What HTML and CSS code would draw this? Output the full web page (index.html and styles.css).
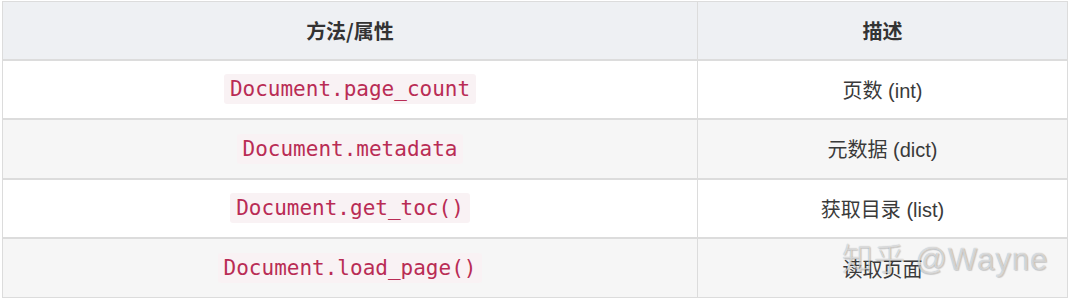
FILE: index.html
```html
<!DOCTYPE html>
<html lang="zh">
<head>
<meta charset="utf-8">
<link rel="stylesheet" href="styles.css">
</head>
<body>
<div class="wrap">
<table class="tbl">
  <thead>
    <tr><th class="c1">方法/属性</th><th class="c2">描述</th></tr>
  </thead>
  <tbody>
    <tr><td class="c1"><code>Document.page_count</code></td><td class="c2">页数 (int)</td></tr>
    <tr class="alt"><td class="c1"><code>Document.metadata</code></td><td class="c2">元数据 (dict)</td></tr>
    <tr><td class="c1"><code>Document.get_toc()</code></td><td class="c2">获取目录 (list)</td></tr>
    <tr class="alt"><td class="c1"><code>Document.load_page()</code></td><td class="c2">读取页面</td></tr>
  </tbody>
</table>
<div class="watermark">知乎 @Wayne</div>
</div>
</body>
</html>
```
FILE: styles.css
```css
html, body { margin: 0; padding: 0; background: #fff; }
body { padding: 1px 3px 0 2px; }
.wrap { position: relative; }
.tbl {
  width: 100%;
  border-collapse: collapse;
  font-family: "Liberation Sans", "Noto Sans CJK SC", sans-serif;
  font-size: 20px;
  color: #333;
}
.tbl th, .tbl td {
  border: 1px solid #dcdcdc;
  text-align: center;
  padding: 0 10px;
  box-sizing: border-box;
}
.tbl th {
  height: 58px;
  background: #eef0f3;
  font-weight: bold;
  color: #333;
  font-family: "Noto Sans CJK SC", sans-serif;
}
.tbl td { height: 59.5px; }
.tbl tbody tr { background: #fff; }
.tbl tbody tr.alt { background: #f6f6f6; }
.tbl tbody tr td { border-top: 2px solid #dcdcdc; }
.c1 { width: 695px; }
.tbl td.c2 { font-family: "Liberation Sans", "Noto Sans CJK SC", sans-serif; color: #3a3a3a; }
code {
  font-family: "DejaVu Sans Mono", monospace;
  font-size: 21px;
  color: #b92c55;
  background: #f9f2f4;
  padding: 3px 6px;
  border-radius: 3px;
}
.watermark {
  position: absolute;
  left: 840px;
  top: 233px;
  font-family: "Liberation Sans", "Noto Sans CJK SC", sans-serif;
  font-size: 31px;
  font-weight: 300;
  color: rgba(255,255,255,0.6);
  text-shadow: 0 0 1px rgba(0,0,0,0.35), 1px 1px 1px rgba(0,0,0,0.15);
  letter-spacing: 1px;
  pointer-events: none;
}
```
